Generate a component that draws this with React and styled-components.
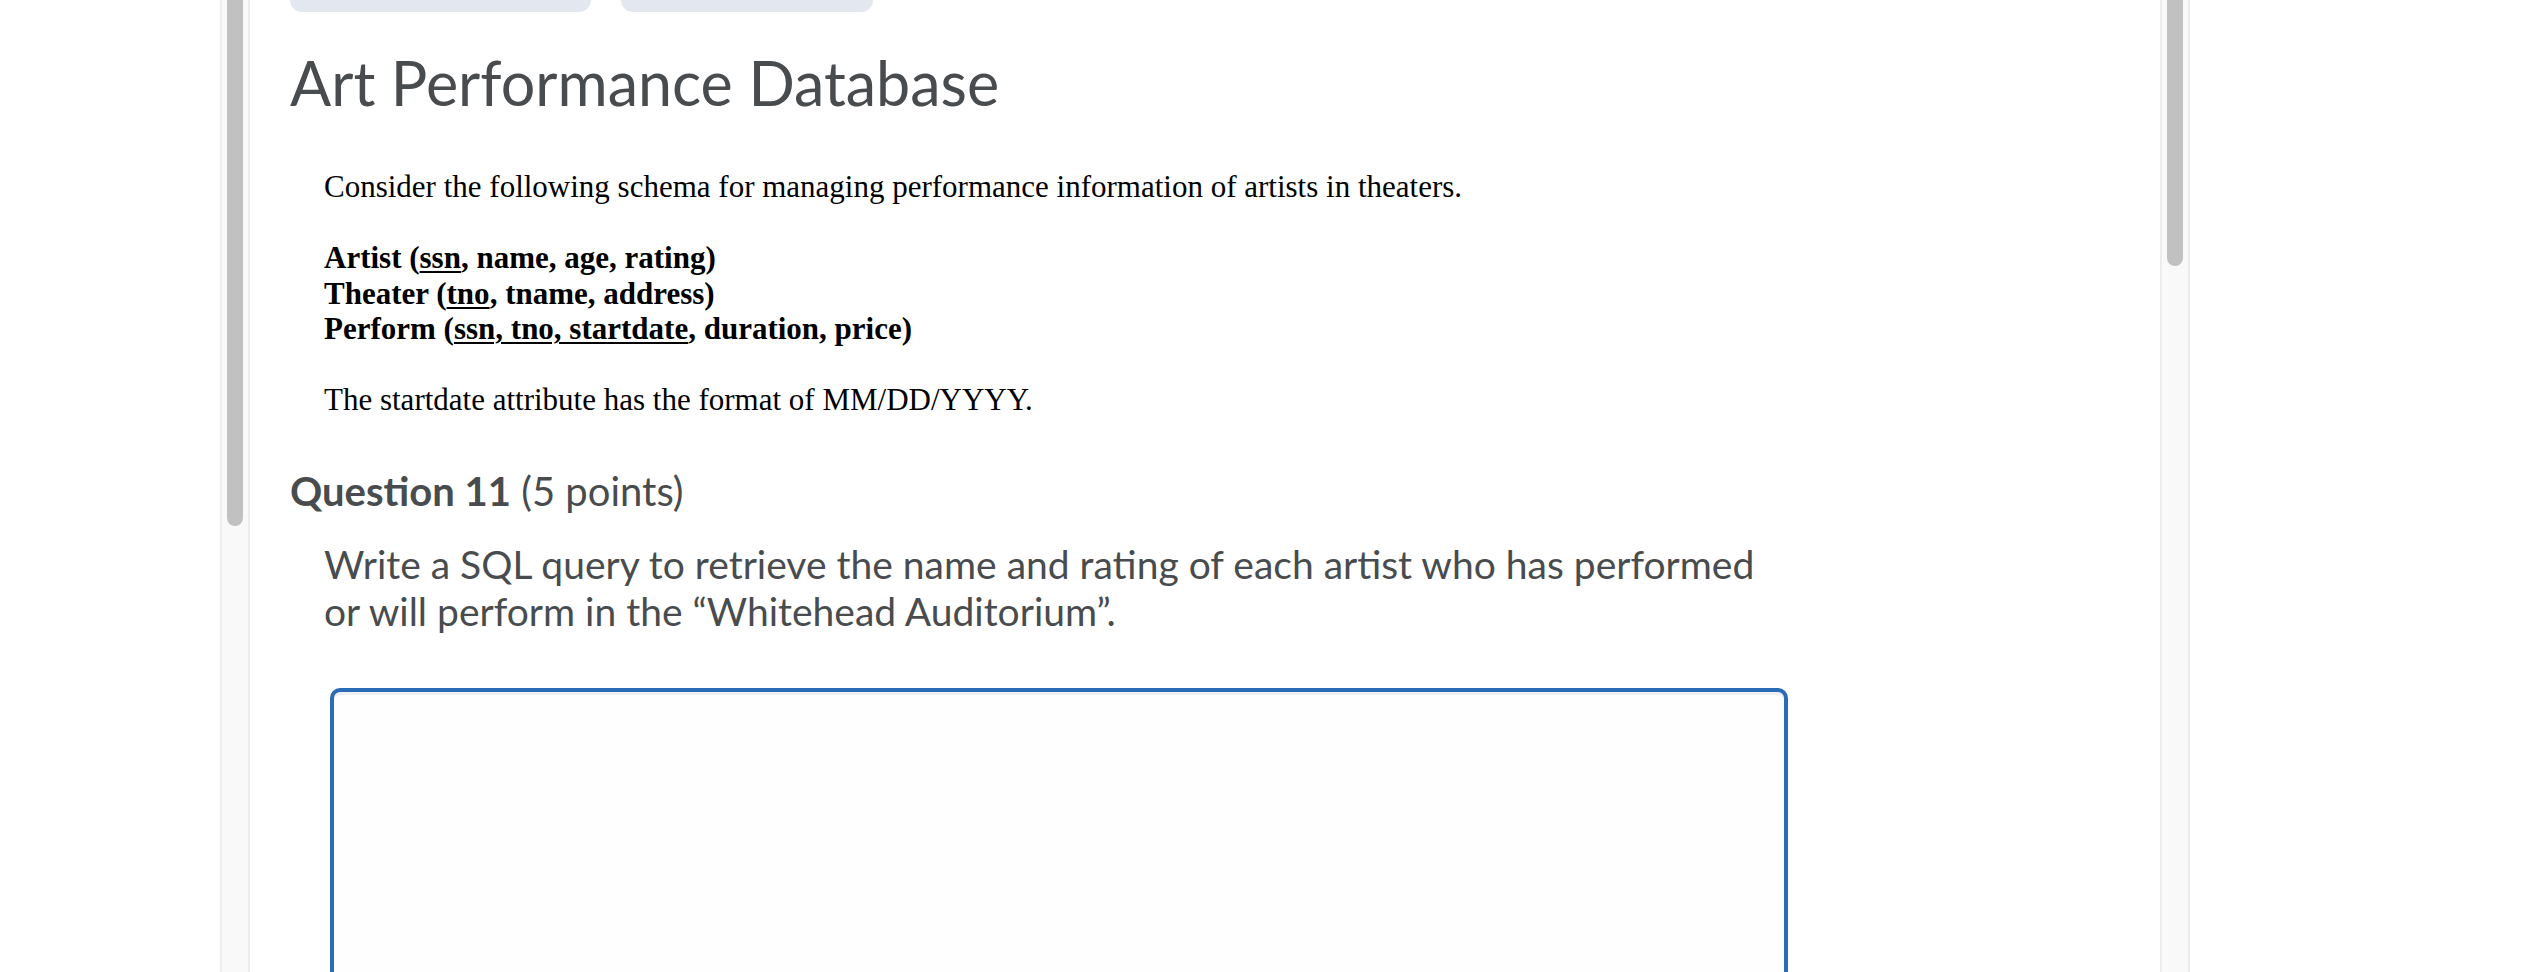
import React from "react"
import styled, { createGlobalStyle } from "styled-components"

const GlobalStyle = createGlobalStyle`
  html, body {
    margin: 0;
    padding: 0;
    background: #ffffff;
    overflow: hidden;
  }
`

const Page = styled.div`
  display: flex;
  height: 972px;
  overflow: hidden;
  padding-left: 220px;
`

const Track = styled.div`
  flex: 0 0 26px;
  height: 100%;
  border-left: 2px solid #ececec;
  border-right: 2px solid #ececec;
  background: #f9f9f9;
  display: flex;
  justify-content: center;
`

const Thumb = styled.div`
  width: 16px;
  height: ${(p) => p.length}px;
  background: #c1c1c1;
  border-radius: 0 0 8px 8px;
`

const Content = styled.div`
  flex: 0 0 1910px;
  padding-left: 40px;
  box-sizing: border-box;
  font-family: Lato, "Open Sans", sans-serif;
  color: #494c4e;
`

const Tabs = styled.div`
  display: flex;
  gap: 30px;
`

const Tab = styled.div`
  width: ${(p) => p.width}px;
  height: 12px;
  background: #e3e8f0;
  border-radius: 0 0 12px 12px;
`

const Title = styled.h1`
  margin: 35px 0 0;
  font-size: 61px;
  line-height: 72px;
  font-weight: 400;
  color: #494c4e;
`

const Schema = styled.div`
  margin-top: 50px;
  padding-left: 34px;
  font-family: "Liberation Serif", "Times New Roman", serif;
  font-size: 31px;
  line-height: 35.5px;
  color: #000000;

  p {
    margin: 0 0 35.5px;
  }

  p:last-child {
    margin-bottom: 0;
  }
`

const Relations = styled.p`
  font-weight: 700;

  u {
    text-decoration-thickness: 2px;
    text-underline-offset: 3px;
  }
`

const QuestionHeader = styled.h2`
  margin: 51px 0 0;
  font-size: 40px;
  line-height: 44px;
  font-weight: 400;

  strong {
    font-weight: 700;
  }
`

const QuestionBody = styled.div`
  margin-top: 28px;
  padding-left: 34px;
  width: 1470px;
  font-size: 39px;
  line-height: 47px;
`

const Answer = styled.div`
  margin: 53px 0 0 40px;
  width: 1458px;
  height: 420px;
  box-sizing: border-box;
  border: 4px solid #2b6cb8;
  border-radius: 10px;
  background: #fefefe;
  box-shadow: inset 0 3px 0 #eff0f1;
`

const App = () => {
  return (
    <>
      <GlobalStyle />
      <Page>
        <Track>
          <Thumb length={526} />
        </Track>
        <Content>
          <Tabs>
            <Tab width={301} />
            <Tab width={252} />
          </Tabs>
          <Title>Art Performance Database</Title>
          <Schema>
            <p>
              Consider the following schema for managing performance
              information of artists in theaters.
            </p>
            <Relations>
              Artist (<u>ssn</u>, name, age, rating)
              <br />
              Theater (<u>tno</u>, tname, address)
              <br />
              Perform (<u>ssn, tno, startdate</u>, duration, price)
            </Relations>
            <p>The startdate attribute has the format of MM/DD/YYYY.</p>
          </Schema>
          <QuestionHeader>
            <strong>Question 11</strong> (5 points)
          </QuestionHeader>
          <QuestionBody>
            Write a SQL query to retrieve the name and rating of each artist
            who has performed or will perform in the “Whitehead Auditorium”.
          </QuestionBody>
          <Answer />
        </Content>
        <Track>
          <Thumb length={266} />
        </Track>
      </Page>
    </>
  )
}

export default App
